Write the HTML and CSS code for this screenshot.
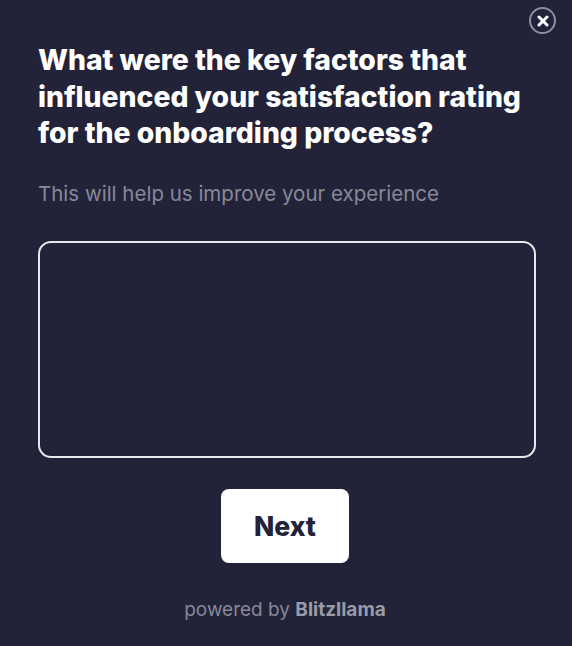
FILE: index.html
```html
<!DOCTYPE html>
<html>
<head>
<meta charset="utf-8">
<link rel="stylesheet" href="styles.css">
</head>
<body>
<div class="survey">
  <button class="close" aria-label="Close">
    <svg width="12" height="12" viewBox="0 0 12 12"><path d="M2 2L10 10M10 2L2 10" stroke="#fff" stroke-width="3" stroke-linecap="round"/></svg>
  </button>
  <h1 class="title">What were the key factors that influenced your satisfaction rating for the onboarding process?</h1>
  <p class="subtitle">This will help us improve your experience</p>
  <div class="answer"></div>
  <div class="actions"><button class="next">Next</button></div>
  <div class="powered">powered by <b>Blitzllama</b></div>
</div>
</body>
</html>
```
FILE: styles.css
```css
html, body {
  margin: 0;
  padding: 0;
  background: #222338;
}
.survey {
  position: relative;
  width: 572px;
  height: 646px;
  box-sizing: border-box;
  padding: 42px 36px 0 38px;
  font-family: Inter, "Noto Sans", sans-serif;
  display: flex;
  flex-direction: column;
}
.close {
  position: absolute;
  top: 7px;
  right: 16px;
  width: 27px;
  height: 27px;
  border-radius: 50%;
  border: 2px solid #8e8f9c;
  background: transparent;
  padding: 0;
  display: flex;
  align-items: center;
  justify-content: center;
}
.title {
  margin: 0 -8px 0 0;
  color: #ffffff;
  font-size: 28.3px;
  line-height: 36.5px;
  font-weight: 800;
  letter-spacing: 0;
}
.subtitle {
  margin: 28px 0 0;
  color: #878898;
  font-size: 20.5px;
  line-height: 28px;
  font-weight: 400;
}
.answer {
  margin-top: 33px;
  height: 217px;
  box-sizing: border-box;
  border: 2px solid #e8e8ec;
  border-radius: 13px;
}
.actions {
  display: flex;
  justify-content: center;
  margin-top: 31px;
  margin-right: 4px;
}
.next {
  width: 128px;
  height: 74px;
  border: none;
  border-radius: 8px;
  background: #ffffff;
  color: #222338;
  font-family: Inter, "Noto Sans", sans-serif;
  font-size: 26.5px;
  font-weight: 800;
}
.powered {
  margin-top: 35px;
  margin-right: 4px;
  text-align: center;
  color: #878898;
  font-size: 19px;
  line-height: 24px;
}
.powered b {
  font-weight: 700;
  color: #9a9ba8;
}
```
